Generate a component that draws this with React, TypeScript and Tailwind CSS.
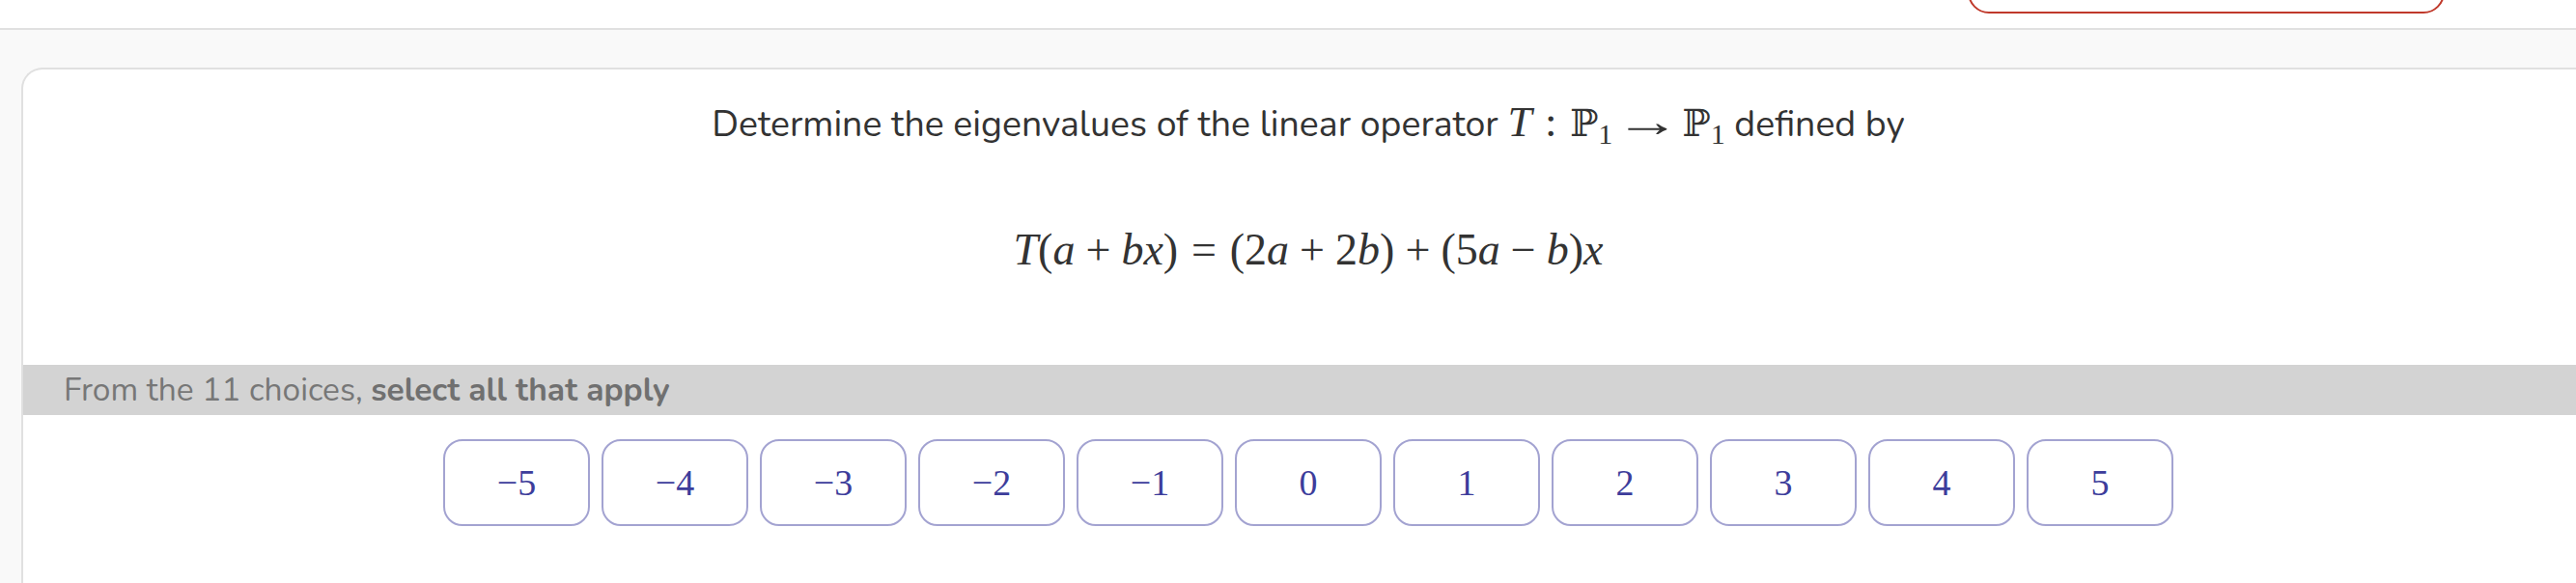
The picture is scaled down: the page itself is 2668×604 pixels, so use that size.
import React from "react";

const serif = { fontFamily: '"Liberation Serif", "DejaVu Serif", serif' };

function MathVar({ children }: { children: React.ReactNode }) {
  return <span className="italic">{children}</span>;
}

function Op({ children, wide }: { children: React.ReactNode; wide?: boolean }) {
  return <span className={wide ? "mx-[0.3em]" : "mx-[0.24em]"}>{children}</span>;
}

export default function App() {
  const choices = ["\u22125", "\u22124", "\u22123", "\u22122", "\u22121", "0", "1", "2", "3", "4", "5"];
  return (
    <div
      className="w-[2668px] h-[604px] overflow-hidden bg-[#f9f9f9]"
      style={{ fontFamily: '"Nunito", "Lato", "Open Sans", sans-serif' }}
    >
      <div className="h-[31px] bg-white border-b-2 border-[#e0e0e0] flex justify-end pr-[136px]">
        <div className="w-[494px] h-[60px] -mt-[46px] shrink-0 border-2 border-[#c0392b] rounded-[22px] bg-white" />
      </div>
      <div className="pt-[39px] pl-[22px]">
        <div className="w-[2664px] h-[600px] bg-white border-t-2 border-l-2 border-[#e0e0e0] rounded-tl-[22px]">
          <div className="pt-[29px] text-center text-[37.5px] leading-[51px] text-[#333333]">
            Determine the eigenvalues of the linear operator{" "}
            <span className="text-[45px]" style={serif}>
              <MathVar>T</MathVar>
              <span className="mx-[0.3em]">:</span>
              <span style={{ fontFamily: '"DejaVu Serif", serif' }} className="text-[39px]">ℙ</span>
              <sub className="text-[30px]">1</sub>
              <span className="mx-[0.3em] inline-block scale-x-[1.5]">→</span>
              <span style={{ fontFamily: '"DejaVu Serif", serif' }} className="text-[39px]">ℙ</span>
              <sub className="text-[30px]">1</sub>
            </span>{" "}
            defined by
          </div>
          <div className="mt-[74px] h-[60px] flex items-center justify-center text-[46px] text-[#333333]" style={serif}>
            <MathVar>T</MathVar>(<MathVar>a</MathVar>
            <Op>+</Op>
            <MathVar>bx</MathVar>)<Op wide>=</Op>(2<MathVar>a</MathVar>
            <Op>+</Op>2<MathVar>b</MathVar>)<Op>+</Op>(5<MathVar>a</MathVar>
            <Op>{"\u2212"}</Op>
            <MathVar>b</MathVar>)<MathVar>x</MathVar>
          </div>
          <div className="mt-[90px] h-[52px] bg-[#d3d3d3] flex items-center pl-[42px] text-[33.5px] text-[#777777]">
            <span>
              From the 11 choices, <span className="font-bold text-[#707070]">select all that apply</span>
            </span>
          </div>
          <div className="mt-[25px] flex justify-center gap-[12px]">
            {choices.map((c) => (
              <div
                key={c}
                className="w-[152px] h-[90px] shrink-0 border-2 border-[#a3a3d1] rounded-[20px] flex items-center justify-center text-[38px] text-[#3d3d9b]"
                style={serif}
              >
                {c}
              </div>
            ))}
          </div>
        </div>
      </div>
    </div>
  );
}
